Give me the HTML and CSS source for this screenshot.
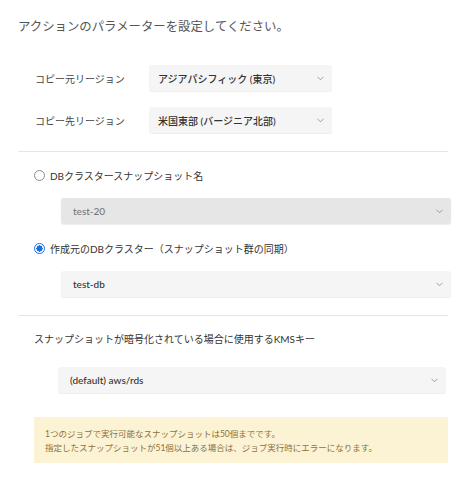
FILE: index.html
```html
<!DOCTYPE html>
<html lang="ja">
<head>
<meta charset="utf-8">
<link rel="stylesheet" href="styles.css">
</head>
<body>
<div class="page">
  <p class="title">アクションのパラメーターを設定してください。</p>

  <div class="regions">
    <div class="row">
      <span class="label">コピー元リージョン</span>
      <div class="select region-select"><span class="value">アジアパシフィック (東京)</span><svg class="chev" viewBox="0 0 8 5"><path d="M0.5 0.5 L4 4 L7.5 0.5" /></svg></div>
    </div>
    <div class="row">
      <span class="label">コピー先リージョン</span>
      <div class="select region-select"><span class="value">米国東部 (バージニア北部)</span><svg class="chev" viewBox="0 0 8 5"><path d="M0.5 0.5 L4 4 L7.5 0.5" /></svg></div>
    </div>
  </div>

  <div class="divider"></div>

  <div class="section">
    <div class="radio-row">
      <span class="radio"></span>
      <span class="radio-label">DBクラスタースナップショット名</span>
    </div>
    <div class="select wide disabled"><span class="value">test-20</span><svg class="chev" viewBox="0 0 8 5"><path d="M0.5 0.5 L4 4 L7.5 0.5" /></svg></div>
    <div class="radio-row">
      <span class="radio checked"></span>
      <span class="radio-label">作成元のDBクラスター（スナップショット群の同期）</span>
    </div>
    <div class="select wide"><span class="value">test-db</span><svg class="chev" viewBox="0 0 8 5"><path d="M0.5 0.5 L4 4 L7.5 0.5" /></svg></div>
  </div>

  <div class="divider"></div>

  <div class="section kms">
    <p class="kms-label">スナップショットが暗号化されている場合に使用するKMSキー</p>
    <div class="select kms-select"><span class="value">(default) aws/rds</span><svg class="chev" viewBox="0 0 8 5"><path d="M0.5 0.5 L4 4 L7.5 0.5" /></svg></div>
  </div>

  <div class="warning">
    <p>1つのジョブで実行可能なスナップショットは50個までです。</p>
    <p>指定したスナップショットが51個以上ある場合は、ジョブ実行時にエラーになります。</p>
  </div>
</div>
</body>
</html>
```

FILE: styles.css
```css
* { box-sizing: border-box; }
html, body { margin: 0; padding: 0; background: #ffffff; }
body {
  font-family: Lato, "Noto Sans CJK JP", sans-serif;
  color: #333;
}
p { margin: 0; }
.page {
  width: 474px;
  padding: 19px 26px 0 18px;
}
.title {
  font-size: 12.4px;
  line-height: 16px;
  color: #555;
}
.regions {
  margin-top: 30px;
  padding-left: 17px;
  display: flex;
  flex-direction: column;
  gap: 16px;
}
.row {
  display: flex;
  align-items: center;
}
.label {
  width: 114px;
  font-size: 10px;
  color: #444;
}
.select {
  height: 26px;
  background: #f5f5f5;
  border-radius: 3px;
  box-shadow: 0 1px 1px rgba(0,0,0,0.07);
  display: flex;
  align-items: center;
  justify-content: space-between;
  padding: 0 8px 0 9px;
  font-size: 10px;
  color: #333;
}
.value { font-weight: 500; }
.chev {
  width: 7px;
  height: 5px;
  fill: none;
  stroke: #8a8a8a;
  stroke-width: 0.9;
}
.region-select { width: 183px; }
.divider {
  height: 1px;
  background: #e6e6e6;
  margin-top: 18px;
}
.section {
  padding-left: 16px;
  padding-top: 15px;
  display: flex;
  flex-direction: column;
}
.radio-row {
  height: 16px;
  display: flex;
  align-items: center;
  gap: 5px;
}
.radio {
  width: 11px;
  height: 11px;
  border-radius: 50%;
  border: 1px solid #8c8c8c;
  background: #fff;
  flex-shrink: 0;
}
.radio.checked {
  border: 1px solid #1a6fe0;
  background: radial-gradient(circle, #1a6fe0 0 3px, #fff 3.2px);
}
.radio-label {
  font-size: 10px;
  color: #333;
}
.wide {
  margin-left: 27px;
  width: 390px;
  margin-top: 15px;
  margin-bottom: 16px;
  padding-left: 12px;
}
.wide:last-child { margin-bottom: 0; }
.disabled {
  background: #e6e6e6;
  color: #777;
}
.kms-label {
  font-size: 10px;
  line-height: 16px;
  color: #333;
}
.kms-select {
  margin-top: 20px;
  margin-left: 24px;
  width: 388px;
  padding-left: 12px;
}
.warning {
  margin-top: 24px;
  margin-left: 16px;
  width: 414px;
  background: #fcf2d4;
  padding: 10px 11px 8px;
  font-size: 8.5px;
  line-height: 14px;
  color: #8a7240;
}
```
